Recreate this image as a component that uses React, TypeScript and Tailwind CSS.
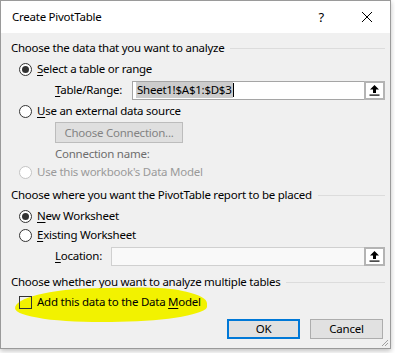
import React from 'react';

const font = { fontFamily: '"Noto Sans", "Open Sans", Arial, sans-serif' };

function Radio({ checked = false, disabled = false }: { checked?: boolean; disabled?: boolean }) {
  return (
    <span
      className={`relative flex h-[13px] w-[13px] shrink-0 items-center justify-center rounded-full border bg-white ${
        disabled ? 'border-[#c4c4c4]' : 'border-[#333333]'
      }`}
    >
      {checked && <span className="h-[7px] w-[7px] rounded-full bg-[#333333]" />}
    </span>
  );
}

function Header({ text }: { text: string }) {
  return (
    <div className="flex items-center gap-[6px]">
      <span className="whitespace-nowrap">{text}</span>
      <span className="h-px flex-1 bg-[#dcdcdc]" />
    </div>
  );
}

function UpArrow() {
  return (
    <svg width="11" height="12" viewBox="0 0 11 12">
      <path d="M5.5 1 L10 5.5 L7 5.5 L7 9 L4 9 L4 5.5 L1 5.5 Z" fill="#000" />
      <rect x="0.5" y="10.5" width="10" height="1.2" fill="#000" />
    </svg>
  );
}

function RefButton() {
  return (
    <span className="-my-px -mr-px flex h-[19px] w-[21px] shrink-0 items-center justify-center border-2 border-[#b4b4b4] bg-white">
      <UpArrow />
    </span>
  );
}

export default function App() {
  return (
    <div className="h-[353px] w-[395px] bg-white text-[11.5px] leading-none tracking-[-0.25px] text-black" style={font}>
      <div className="relative flex h-[349px] w-[391px] flex-col border border-[#9a9a9a] bg-[#f0f0f0] shadow-[0_2px_5px_rgba(0,0,0,0.25)]">
        {/* title bar */}
        <div className="flex h-[32px] items-center bg-white pl-[11px]">
          <span className="flex-1">Create PivotTable</span>
          <span className="mr-[37px] text-[13px]">?</span>
          <svg width="12" height="12" viewBox="0 0 12 12" className="mr-[17px]">
            <path d="M1 1 L11 11 M11 1 L1 11" stroke="#000" strokeWidth="1" />
          </svg>
        </div>

        <div className="flex flex-col pl-[10px] pr-[5px] pt-[4px]">
          <div className="flex h-[22px] flex-col justify-center">
            <Header text="Choose the data that you want to analyze" />
          </div>

          <div className="ml-[8px] flex h-[20px] items-center gap-[5px]">
            <Radio checked />
            <span>
              <span className="underline underline-offset-2">S</span>elect a table or range
            </span>
          </div>

          <div className="ml-[44px] flex h-[22px] items-center">
            <span className="w-[77px]">
              <span className="underline underline-offset-2">T</span>able/Range:
            </span>
            <div className="flex h-[19px] flex-1 items-center border border-[#a5a5a5] bg-white">
              <div className="flex flex-1 items-center pl-[3px]">
                <span className="bg-[#cccccc] px-[1px] py-[2px]">Sheet1!$A$1:$D$3</span>
                <span className="h-[14px] w-px bg-black" />
              </div>
              <RefButton />
            </div>
          </div>

          <div className="ml-[8px] flex h-[20px] items-center gap-[5px]">
            <Radio />
            <span>
              <span className="underline underline-offset-2">U</span>se an external data source
            </span>
          </div>

          <div className="ml-[44px] flex h-[23px] items-center">
            <span className="flex h-[21px] w-[128px] items-center justify-center border border-[#bcbcbc] bg-[#dfdfdf] text-[#838383]">
              Choose Connection...
            </span>
          </div>

          <div className="ml-[44px] flex h-[20px] items-center text-[#6d6d6d]">Connection name:</div>

          <div className="ml-[8px] flex h-[16px] items-center gap-[5px] text-[#9a9a9a]">
            <Radio disabled />
            <span>Use this workbook's Data Model</span>
          </div>

          <div className="mt-[5px] flex h-[20px] flex-col justify-center">
            <Header text="Choose where you want the PivotTable report to be placed" />
          </div>

          <div className="ml-[8px] flex h-[22px] items-center gap-[5px]">
            <Radio checked />
            <span>
              <span className="underline underline-offset-2">N</span>ew Worksheet
            </span>
          </div>

          <div className="ml-[8px] flex h-[16px] items-center gap-[5px]">
            <Radio />
            <span>
              <span className="underline underline-offset-2">E</span>xisting Worksheet
            </span>
          </div>

          <div className="ml-[44px] flex h-[26px] items-center">
            <span className="w-[56px]">
              <span className="underline underline-offset-2">L</span>ocation:
            </span>
            <div className="flex h-[19px] flex-1 items-center border border-[#d0d0d0] bg-[#f9f9f9]">
              <div className="flex-1" />
              <RefButton />
            </div>
          </div>

          <div className="flex h-[26px] flex-col justify-center">
            <Header text="Choose whether you want to analyze multiple tables" />
          </div>

          <div className="relative flex h-[14px] items-center">
            {/* highlighter mark */}
            <span className="absolute left-[4px] top-[-7px] h-[34px] w-[192px] rotate-[-1deg] rounded-[45%_40%_50%_55%/60%_55%_45%_50%] bg-[#f2f200]" />
            <div className="relative ml-[8px] flex items-center gap-[5px]">
              <span className="h-[13px] w-[13px] border border-[#333333]" />
              <span>
                Add this data to the Data <span className="underline underline-offset-2">M</span>odel
              </span>
            </div>
          </div>

          <div className="mr-[2px] mt-[10px] flex justify-end gap-[10px]">
            <span className="flex h-[20px] w-[73px] items-center justify-center border-2 border-[#0078d7] bg-[#e1e1e1]">
              OK
            </span>
            <span className="flex h-[20px] w-[73px] items-center justify-center border border-[#adadad] bg-[#e1e1e1]">
              Cancel
            </span>
          </div>
        </div>

        {/* resize grip */}
        <svg width="8" height="8" viewBox="0 0 8 8" className="absolute bottom-[1px] right-[1px]">
          <path d="M7 1 L1 7 M7 4 L4 7" stroke="#a0a0a0" strokeWidth="1" />
        </svg>
      </div>
    </div>
  );
}
